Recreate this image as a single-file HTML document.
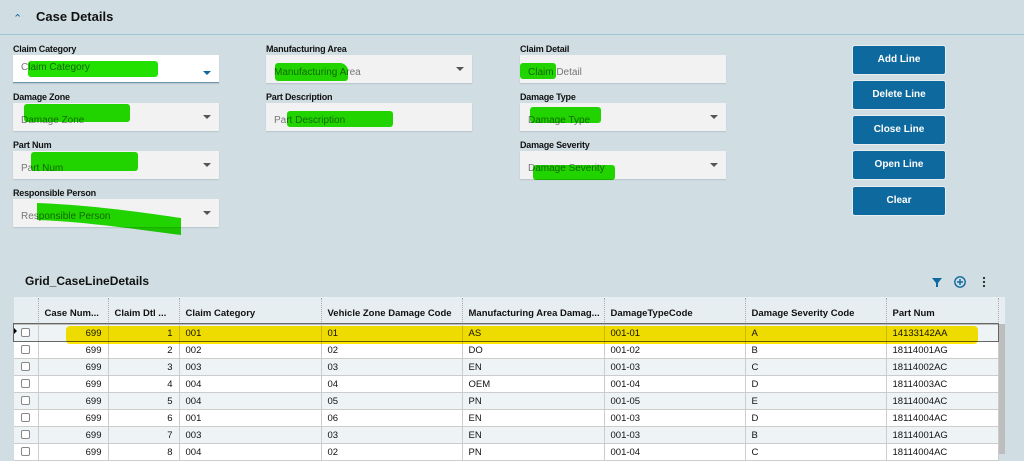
<!DOCTYPE html>
<html><head><meta charset="utf-8"><style>
*{box-sizing:border-box;margin:0;padding:0}
body{width:1024px;height:454px;overflow:hidden;background:#d0dee3;font-family:"Liberation Sans",sans-serif;position:relative;font-size:10px;color:#111}
.a{position:absolute}
.lbl{position:absolute;font-size:9px;font-weight:bold;color:#111;letter-spacing:-0.2px}
.inp{position:absolute;width:206px;height:28px;background:#f2f2f2;box-shadow:0 1px 1px rgba(0,0,0,.12);color:#777;font-size:10px;padding:4px 8px 0;line-height:28px}
.inp .dd{position:absolute;right:8px;top:12px;width:0;height:0;border-left:4px solid transparent;border-right:4px solid transparent;border-top:4px solid #555}
.btn{position:absolute;left:853px;width:92px;height:28px;background:#0e6a9e;border-radius:2px;color:#fff;font-size:10px;font-weight:bold;text-align:center;line-height:28px;box-shadow:0 0 0 1px #e6eef1}
table{position:absolute;left:14px;top:298px;border-collapse:collapse;table-layout:fixed;width:984px;font-size:9.5px}
th{height:26px;background:#e6eef1;text-align:left;font-weight:bold;padding:5px 0 0 6px;border-right:1px dotted #aaa;border-bottom:1px solid #bbb;white-space:nowrap;overflow:hidden}
td{height:17px;padding:1px 6px 0;border-right:1px solid #ccc;border-bottom:1px solid #ccc;white-space:nowrap}
tr:nth-child(even) td{background:#eef4f6}
tr:nth-child(odd) td{background:#fff}
td.r{text-align:right}
.cb{display:inline-block;width:9px;height:9px;border:1px solid #888;border-radius:2px;background:#fff;vertical-align:middle}
.g{position:absolute;background:#22e000;mix-blend-mode:multiply}
</style></head><body>
<div class="a" style="left:13px;top:12px;color:#0e6a9e;font-size:11px">&#8963;</div>
<div class="a" style="left:36px;top:9px;font-size:13px;font-weight:bold;color:#111">Case Details</div>
<div class="a" style="left:0;top:34px;width:1024px;height:1px;background:#9cc5d2"></div>

<div class="lbl" style="left:13px;top:44px">Claim Category</div>
<div class="inp" style="left:13px;top:55px;background:#fff;line-height:18px;border-bottom:1px solid #6a97ad">Claim Category<span class="dd" style="border-top-color:#0e6a9e;top:16px"></span></div>
<div class="lbl" style="left:13px;top:92px">Damage Zone</div>
<div class="inp" style="left:13px;top:103px">Damage Zone<span class="dd"></span></div>
<div class="lbl" style="left:13px;top:140px">Part Num</div>
<div class="inp" style="left:13px;top:151px">Part Num<span class="dd"></span></div>
<div class="lbl" style="left:13px;top:188px">Responsible Person</div>
<div class="inp" style="left:13px;top:199px">Responsible Person<span class="dd"></span></div>

<div class="lbl" style="left:266px;top:44px">Manufacturing Area</div>
<div class="inp" style="left:266px;top:55px">Manufacturing Area<span class="dd"></span></div>
<div class="lbl" style="left:266px;top:92px">Part Description</div>
<div class="inp" style="left:266px;top:103px">Part Description</div>

<div class="lbl" style="left:520px;top:44px">Claim Detail</div>
<div class="inp" style="left:520px;top:55px">Claim Detail</div>
<div class="lbl" style="left:520px;top:92px">Damage Type</div>
<div class="inp" style="left:520px;top:103px">Damage Type<span class="dd"></span></div>
<div class="lbl" style="left:520px;top:140px">Damage Severity</div>
<div class="inp" style="left:520px;top:151px">Damage Severity<span class="dd"></span></div>

<div class="btn" style="top:46px">Add Line</div>
<div class="btn" style="top:81px">Delete Line</div>
<div class="btn" style="top:116px">Close Line</div>
<div class="btn" style="top:151px">Open Line</div>
<div class="btn" style="top:187px">Clear</div>

<div class="g" style="left:28px;top:61px;width:130px;height:16px;border-radius:3px"></div>
<div class="g" style="left:275px;top:63px;width:73px;height:18px;border-radius:3px 8px 3px 3px"></div>
<div class="g" style="left:520px;top:63px;width:36px;height:16px;border-radius:3px"></div>
<div class="g" style="left:24px;top:104px;width:106px;height:18px;border-radius:3px"></div>
<div class="g" style="left:287px;top:111px;width:106px;height:16px;border-radius:3px"></div>
<div class="g" style="left:530px;top:107px;width:71px;height:16px;border-radius:3px"></div>
<div class="g" style="left:31px;top:152px;width:107px;height:19px;border-radius:3px"></div>
<div class="g" style="left:533px;top:165px;width:82px;height:15px;border-radius:3px"></div>
<svg class="a" style="left:0;top:0;mix-blend-mode:multiply" width="200" height="240"><path d="M37 203 C90 205 140 212 181 218 L181 235 C140 230 90 222 37 220 Z" fill="#22e000"/></svg>

<div class="a" style="left:25px;top:274px;font-size:12px;font-weight:bold">Grid_CaseLineDetails</div>
<svg class="a" style="left:930px;top:275px" width="70" height="14">
<path d="M2 3 H12 L8 8 V12 H6 V8 Z" fill="#0e6a9e"/>
<circle cx="30" cy="7" r="5.2" fill="none" stroke="#0e6a9e" stroke-width="1.4"/>
<path d="M27 7H33M30 4V10" stroke="#0e6a9e" stroke-width="1.4"/>
<circle cx="54" cy="3" r="1.1" fill="#222"/><circle cx="54" cy="7" r="1.1" fill="#222"/><circle cx="54" cy="11" r="1.1" fill="#222"/>
</svg>
<div class="a" style="left:14px;top:297px;width:991px;height:157px;background:#e6eef1"></div>
<div class="a" style="left:998px;top:324px;width:7px;height:130px;background:#bdbdbd"></div>
<table>
<colgroup><col style="width:24px"><col style="width:70px"><col style="width:71px"><col style="width:142px"><col style="width:141px"><col style="width:142px"><col style="width:141px"><col style="width:141px"><col style="width:112px"></colgroup>
<tr><th></th><th>Case Num...</th><th>Claim Dtl ...</th><th>Claim Category</th><th>Vehicle Zone Damage Code</th><th>Manufacturing Area Damag...</th><th>DamageTypeCode</th><th>Damage Severity Code</th><th>Part Num</th></tr>
<tr style="outline:1px solid #666"><td style="text-align:center"><span class="cb"></span></td><td class="r">699</td><td class="r">1</td><td>001</td><td>01</td><td>AS</td><td>001-01</td><td>A</td><td>14133142AA</td></tr>
<tr><td style="text-align:center"><span class="cb"></span></td><td class="r">699</td><td class="r">2</td><td>002</td><td>02</td><td>DO</td><td>001-02</td><td>B</td><td>18114001AG</td></tr>
<tr><td style="text-align:center"><span class="cb"></span></td><td class="r">699</td><td class="r">3</td><td>003</td><td>03</td><td>EN</td><td>001-03</td><td>C</td><td>18114002AC</td></tr>
<tr><td style="text-align:center"><span class="cb"></span></td><td class="r">699</td><td class="r">4</td><td>004</td><td>04</td><td>OEM</td><td>001-04</td><td>D</td><td>18114003AC</td></tr>
<tr><td style="text-align:center"><span class="cb"></span></td><td class="r">699</td><td class="r">5</td><td>004</td><td>05</td><td>PN</td><td>001-05</td><td>E</td><td>18114004AC</td></tr>
<tr><td style="text-align:center"><span class="cb"></span></td><td class="r">699</td><td class="r">6</td><td>001</td><td>06</td><td>EN</td><td>001-03</td><td>D</td><td>18114004AC</td></tr>
<tr><td style="text-align:center"><span class="cb"></span></td><td class="r">699</td><td class="r">7</td><td>003</td><td>03</td><td>EN</td><td>001-03</td><td>B</td><td>18114001AG</td></tr>
<tr><td style="text-align:center"><span class="cb"></span></td><td class="r">699</td><td class="r">8</td><td>004</td><td>02</td><td>PN</td><td>001-04</td><td>C</td><td>18114004AC</td></tr>
</table>
<div class="a" style="left:14px;top:328px;width:0;height:0;border-top:3px solid transparent;border-bottom:3px solid transparent;border-left:3px solid #000"></div>
<div class="a" style="left:66px;top:326px;width:912px;height:18px;background:#ffe600;mix-blend-mode:multiply;border-radius:4px"></div>
</body></html>
